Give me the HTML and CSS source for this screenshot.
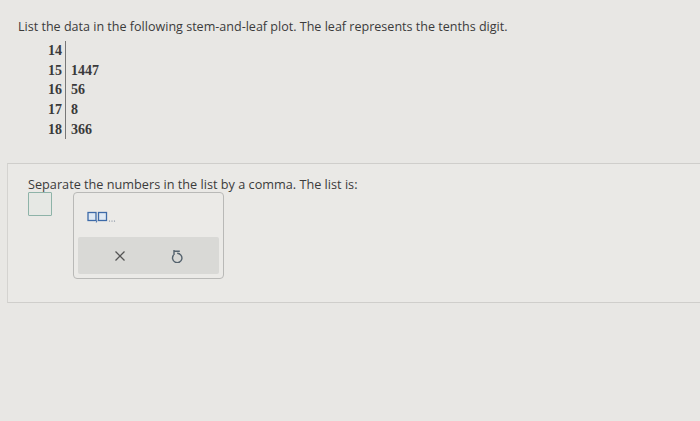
FILE: index.html
```html
<!DOCTYPE html>
<html>
<head>
<meta charset="utf-8">
<link rel="stylesheet" href="styles.css">
</head>
<body>
<div class="page">
  <p class="question">List the data in the following stem-and-leaf plot. The leaf represents the tenths digit.</p>
  <div class="plot">
    <div class="row"><span class="stem">14</span><span class="leaf"></span></div>
    <div class="row"><span class="stem">15</span><span class="leaf">1447</span></div>
    <div class="row"><span class="stem">16</span><span class="leaf">56</span></div>
    <div class="row"><span class="stem">17</span><span class="leaf">8</span></div>
    <div class="row"><span class="stem">18</span><span class="leaf">366</span></div>
  </div>
  <div class="panel">
    <p class="prompt">Separate the numbers in the list by a comma. The list is:</p>
    <div class="answer-row">
      <div class="answer-box"></div>
      <div class="popup">
        <div class="palette">
          <svg width="34" height="12" viewBox="0 0 34 12">
            <rect x="1" y="1.5" width="8" height="8" fill="#dfe9f4" stroke="#3d6aa8" stroke-width="1.3"/>
            <rect x="11.5" y="1.5" width="8" height="8" fill="#dfe9f4" stroke="#3d6aa8" stroke-width="1.3"/>
            <path d="M10 9.5 L9.3 11.5" stroke="#3d6aa8" stroke-width="1"/>
            <circle cx="22.5" cy="10" r="0.6" fill="#6a7a90"/>
            <circle cx="25" cy="10" r="0.6" fill="#6a7a90"/>
            <circle cx="27.5" cy="10" r="0.6" fill="#6a7a90"/>
          </svg>
        </div>
        <div class="actions">
          <svg class="ico" width="14" height="14" viewBox="0 0 14 14">
            <path d="M2.5 2.5 L11.5 11.5 M11.5 2.5 L2.5 11.5" stroke="#555" stroke-width="1.3" fill="none"/>
          </svg>
          <svg class="ico" width="14" height="14" viewBox="0 0 14 14">
            <path d="M3.6 6 A4.7 4.7 0 1 0 7.2 4.3" stroke="#55636e" stroke-width="1.4" fill="none"/>
            <path d="M4 1 L4 6 M4 2.2 L9.8 2.2" stroke="#55636e" stroke-width="1.4" fill="none"/>
          </svg>
        </div>
      </div>
    </div>
  </div>
</div>
</body>
</html>
```
FILE: styles.css
```css
html, body {
  margin: 0;
  padding: 0;
  background: #e8e7e4;
}
.page {
  width: 700px;
  height: 421px;
  font-family: "Open Sans", "DejaVu Sans", sans-serif;
  color: #3b3b3b;
  overflow: hidden;
}
.question {
  margin: 0;
  padding: 18px 0 0 18px;
  font-size: 12.55px;
  line-height: 18px;
}
.plot {
  margin: 5px 0 0 46px;
  font-family: "Liberation Serif", serif;
  font-weight: bold;
  font-size: 14px;
  color: #3a3a3a;
}
.row {
  display: flex;
  height: 19.7px;
  align-items: center;
}
.stem {
  width: 16px;
  padding-right: 3px;
  text-align: right;
  border-right: 1px solid #777;
  height: 100%;
  display: flex;
  align-items: center;
  justify-content: flex-end;
}
.leaf {
  padding-left: 5px;
}
.panel {
  margin: 24px 0 0 7px;
  height: 138px;
  border-top: 1px solid #cfcecb;
  border-left: 1px solid #d4d3d0;
  border-bottom: 1px solid #cfcecb;
  background: #eae9e6;
}
.prompt {
  margin: 0;
  padding: 13px 0 0 20px;
  font-size: 12.7px;
  line-height: 14px;
}
.answer-row {
  display: flex;
  align-items: flex-start;
  padding: 1px 0 0 20px;
  gap: 21px;
}
.answer-box {
  width: 22px;
  height: 22px;
  margin-top: 0;
  border: 1.5px solid #8eb3a8;
  border-radius: 1px;
  background: #e6e8e4;
}
.popup {
  width: 151px;
  height: 87px;
  border: 1px solid #b9b9b7;
  border-radius: 4px;
  background: #ebeae7;
  box-sizing: border-box;
  padding: 0 4px 4px 4px;
  display: flex;
  flex-direction: column;
}
.palette {
  padding: 13px 0 0 9px;
  height: 31px;
  box-sizing: border-box;
}
.actions {
  flex: 1;
  margin-top: 13px;
  background: #d9d9d6;
  border-radius: 2px;
  display: flex;
  align-items: center;
  justify-content: space-around;
  padding: 0 14px;
}
```
